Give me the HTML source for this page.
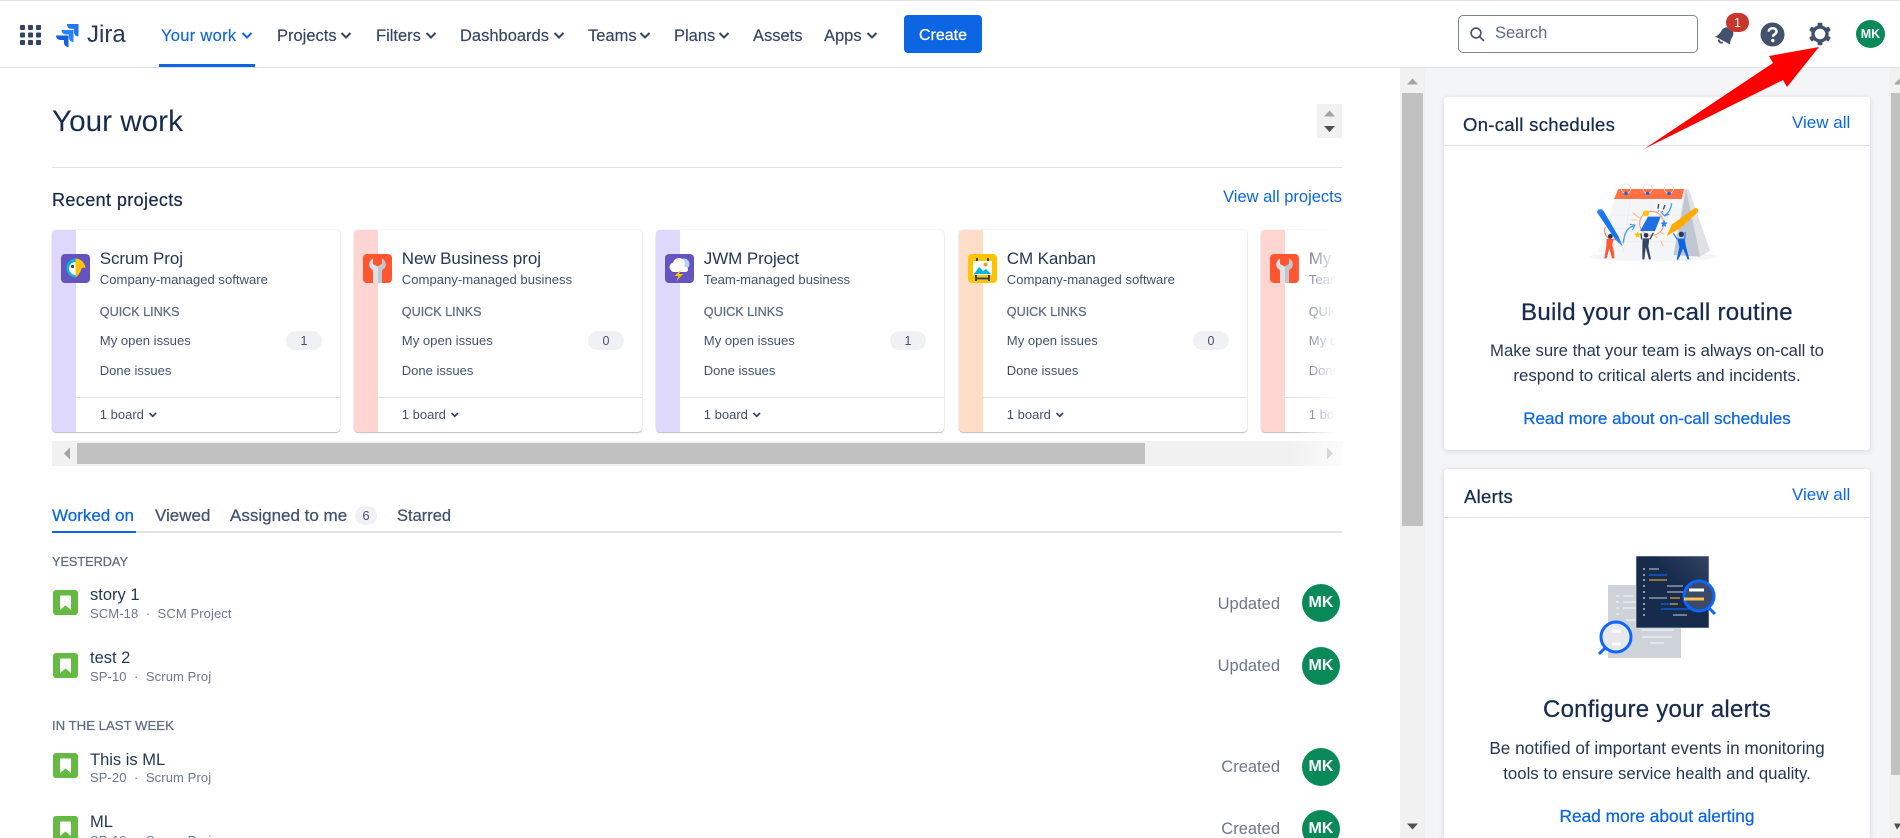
<!DOCTYPE html>
<html><head><meta charset="utf-8"><title>Your work - Jira</title>
<style>
html,body{margin:0;padding:0;width:1900px;height:838px;overflow:hidden;background:#fff;font-family:"Liberation Sans",sans-serif;color:#172b4d}
#w{position:relative;width:1900px;height:838px;overflow:hidden;background:#fff}
.a,.t{position:absolute}
.t{white-space:nowrap;line-height:20px;height:20px}
.nav{font-size:16.5px;color:#344563;-webkit-text-stroke:.15px #344563}
.m{-webkit-text-stroke:.25px currentColor}
.blue{color:#0c66e4}
.card{position:absolute;top:230px;width:288px;height:202px;background:#fff;border-radius:4px;box-shadow:0 1px 1px rgba(9,30,66,.25),0 0 1px rgba(9,30,66,.25);overflow:hidden}
.card .s{position:absolute;left:0;top:0;bottom:0;width:24px}
.card .t{left:47.8px}
.ti{top:19px;font-size:17px;color:#253858;letter-spacing:-.1px}
.su{top:40px;font-size:13.1px;color:#42526e}
.ql{top:72px;font-size:12.6px;color:#5e6c84;font-weight:400;-webkit-text-stroke:.25px #5e6c84}
.l1{top:101px;font-size:13.1px;color:#42526e}
.l2{top:131px;font-size:13px;color:#42526e}
.bd{top:175px;font-size:13px;color:#42526e}
.pill{position:absolute;left:234px;top:101px;width:36px;height:19px;border-radius:10px;background:#f0f1f4;font-size:12.5px;line-height:20px;text-align:center;color:#42526e}
.dv{position:absolute;left:24px;right:0;top:167px;height:1px;background:#dfe1e6}
.icon{position:absolute;left:9px;top:24px;width:29px;height:29px}
.rt{font-size:16.5px;color:#253858}
.rs{font-size:13px;color:#6b778c;letter-spacing:.1px}
.up{font-size:16.5px;color:#6b778c;text-align:right;width:90px;left:1190px}
.av{position:absolute;left:1302px;width:38px;height:38px;border-radius:50%;background:#0a8a59;color:#fff;font-size:16px;font-weight:700;line-height:38px;text-align:center}
.box{position:absolute;left:1444px;width:426px;background:#fff;border-radius:4px;box-shadow:0 1px 6px rgba(9,30,66,.14)}
.c{left:1444px;width:426px;text-align:center}
.hd{font-size:18.5px;letter-spacing:.3px;color:#172b4d}
.tb{font-size:17px;color:#42526e}
</style></head><body><div id="w">

<!-- top nav -->
<div class="a" style="left:0;top:0;width:1900px;height:1px;background:#e3e3e3"></div>
<div class="a" style="left:0;top:67px;width:1900px;height:1px;background:#dfe1e6"></div>
<svg class="a" style="left:20px;top:25px" width="22" height="20" viewBox="0 0 22 20" fill="#344563"><rect x="0" y="0" width="5" height="5" rx="1"/><rect x="8" y="0" width="5" height="5" rx="1"/><rect x="16" y="0" width="5" height="5" rx="1"/><rect x="0" y="7.5" width="5" height="5" rx="1"/><rect x="8" y="7.5" width="5" height="5" rx="1"/><rect x="16" y="7.5" width="5" height="5" rx="1"/><rect x="0" y="15" width="5" height="5" rx="1"/><rect x="8" y="15" width="5" height="5" rx="1"/><rect x="16" y="15" width="5" height="5" rx="1"/></svg>
<svg class="a" style="left:56px;top:24px" width="23" height="23" viewBox="0 0 23 23"><path d="M11 0h11.500v12.500c-2.600 0-4.500-2-4.500-4.500V4.800h-3.500C12.500 4.800 11 2.800 11 0z" fill="#1f78f0"/><path d="M5.500 6h12v12c-2.600 0-4.600-2-4.600-4.500v-3H10C7.500 10.500 5.500 8.500 5.500 6z" fill="#2684ff"/><path d="M0 11.500h12.500V23c-2.600 0-4.600-2-4.600-4.500V16H4.500C2 16 0 14 0 11.500z" fill="#1261d8"/></svg>
<div class="t" style="left:87px;top:24px;font-size:24px;line-height:22px;color:#253858">Jira</div>

<div class="t nav" style="left:161px;top:26px;letter-spacing:.3px;color:#0c66e4;-webkit-text-stroke:.15px #0c66e4">Your work</div>
<div class="t nav" style="left:277px;top:26px">Projects</div>
<div class="t nav" style="left:376px;top:26px">Filters</div>
<div class="t nav" style="left:460px;top:26px">Dashboards</div>
<div class="t nav" style="left:588px;top:26px">Teams</div>
<div class="t nav" style="left:674px;top:26px">Plans</div>
<div class="t nav" style="left:753px;top:26px">Assets</div>
<div class="t nav" style="left:824px;top:26px">Apps</div>
<svg class="a" style="left:0;top:0" width="900" height="67" fill="none" stroke="#344563" stroke-width="2"><path d="M242.500 33l4.500 4.500 4.500-4.500" stroke="#0c66e4"/><path d="M341.500 33l4.500 4.500 4.500-4.500M426.500 33l4.500 4.500 4.500-4.500M554.500 33l4.500 4.500 4.500-4.500M640.500 33l4.500 4.500 4.500-4.500M719.500 33l4.500 4.500 4.500-4.500M867.500 33l4.500 4.500 4.500-4.500"/></svg>
<div class="a" style="left:159px;top:64px;width:96px;height:3px;background:#0c66e4"></div>
<div class="a" style="left:904px;top:15px;width:78px;height:38px;background:#0c66e4;border-radius:4px;color:#fff;font-size:16px;line-height:41px;text-align:center;-webkit-text-stroke:.3px #fff">Create</div>

<div class="a" style="left:1458px;top:15px;width:238px;height:36px;border:1px solid #7a869a;border-radius:5px;background:#fff"></div>
<svg class="a" style="left:1470px;top:27px" width="15" height="15" fill="none" stroke="#42526e" stroke-width="1.600"><circle cx="6" cy="6" r="4.900"/><path d="M9.700 9.700l4.300 4.300"/></svg>
<div class="t" style="left:1495px;top:23px;font-size:16.500px;color:#5e6c84">Search</div>
<svg class="a" style="left:1712px;top:22px" width="26" height="24" viewBox="0 0 26 24"><path d="M3 14.500c3-1 5-3 6.500-6 2-3.500 6-4 9-2 3 2.200 4 5.500 1.500 9-1.500 2.500-2 4.500-1.800 7z" fill="#42526e"/><path d="M7 17.500c-.5 2.500 2 4 3.800 2.800" fill="none" stroke="#42526e" stroke-width="1.800"/></svg>
<div class="a" style="left:1726px;top:13px;width:23px;height:19px;border-radius:10px;background:#c9372c;color:#fff;font-size:13px;line-height:19px;text-align:center">1</div>
<svg class="a" style="left:1760px;top:22px" width="25" height="25" viewBox="0 0 25 25"><circle cx="12.500" cy="12.500" r="12" fill="#42526e"/><path d="M8.700 9.700c.1-2.300 1.800-3.500 3.900-3.500 2.300 0 3.900 1.300 3.900 3.200 0 1.600-1 2.400-2.100 3.100-1 .6-1.400 1.100-1.400 2.200" fill="none" stroke="#fff" stroke-width="2.500"/><circle cx="12.800" cy="18.500" r="1.700" fill="#fff"/></svg>
<svg class="a" style="left:1808px;top:22px" width="24" height="24" viewBox="0 0 24 24"><g fill="#42526e"><rect x="9.600" y="0.800" width="4.800" height="22.400" rx="1"/><rect x="9.600" y="0.800" width="4.800" height="22.400" rx="1" transform="rotate(60 12 12)"/><rect x="9.600" y="0.800" width="4.800" height="22.400" rx="1" transform="rotate(120 12 12)"/></g><circle cx="12" cy="12" r="7" fill="none" stroke="#42526e" stroke-width="3.400"/><circle cx="12" cy="12" r="5.300" fill="#fff"/></svg>
<div class="a" style="left:1856px;top:20px;width:29px;height:28px;border-radius:50%;background:#0a8a59;color:#fff;font-size:12.500px;font-weight:700;line-height:28px;text-align:center">MK</div>

<!-- left column -->
<div class="t" style="left:52px;top:107px;height:30px;line-height:30px;font-size:29.700px;color:#172b4d">Your work</div>
<div class="a" style="left:1317px;top:104px;width:25px;height:34px;background:#f1f1f1"></div>
<svg class="a" style="left:1317px;top:104px" width="25" height="34"><path d="M7 12.500l5.500-6 5.500 6z" fill="#a3a3a3"/><path d="M7 22h11l-5.500 6z" fill="#505050"/></svg>
<div class="a" style="left:52px;top:167px;width:1290px;height:1px;background:#dfe1e6"></div>
<div class="t m" style="left:52px;top:190px;font-size:18px;letter-spacing:.4px;color:#172b4d">Recent projects</div>
<div class="t blue" style="right:558px;top:187px;font-size:16.500px">View all projects</div>

<div class="a" style="left:50px;top:226px;width:1286px;height:212px;overflow:hidden">
<div style="position:relative;left:-50px;top:-226px;width:1400px;height:450px">

<div class="card" style="left:52px"><div class="s" style="background:#dfd8fd"></div>
<svg class="icon" viewBox="0 0 29 29"><rect width="29" height="29" rx="4" fill="#6554c0"/><path d="M14.500 4.500a9.500 9.500 0 0 0-8 14 9.500 9.500 0 0 0 8 5z" fill="#00b8d9"/><path d="M14.500 8a6.500 6.500 0 0 0 0 13z" fill="#fff"/><circle cx="11.500" cy="12.500" r="1.600" fill="#403294"/><path d="M14.500 4.500c5.500 0 9.500 4.500 10 9.500-1.500-.5-3-.5-4 .5-1 3.500-3 7-6 9z" fill="#ffc400"/></svg>
<div class="t ti">Scrum Proj</div><div class="t su">Company-managed software</div><div class="t ql">QUICK LINKS</div><div class="t l1">My open issues</div><div class="pill">1</div><div class="t l2">Done issues</div><div class="dv"></div><div class="t bd">1 board</div>
<svg class="a" style="left:96px;top:181px" width="10" height="8" fill="none" stroke="#344563" stroke-width="1.700"><path d="M1.500 2l3.300 3.300L8 2"/></svg></div>

<div class="card" style="left:354px"><div class="s" style="background:#ffd5d2"></div>
<svg class="icon" viewBox="0 0 29 29"><rect width="29" height="29" rx="4" fill="#ff5630"/><path d="M10 4.500c-3.500 2-5 6.500-2.500 9.500 1.500 1.500 2.500 1.500 2.500 3.500V29h9V17.500c0-2 1-2 2.500-3.500 2.500-3 1-7.500-2.500-9.500V10l-4.500 2.500L10 10z" fill="#dfe1e6"/><path d="M15 12.500l4-2.500V4.500c3.500 2 5 6.500 2.500 9.500-1.500 1.500-2.500 1.500-2.500 3.500V29h-4z" fill="#c1c7d0"/></svg>
<div class="t ti">New Business proj</div><div class="t su">Company-managed business</div><div class="t ql">QUICK LINKS</div><div class="t l1">My open issues</div><div class="pill">0</div><div class="t l2">Done issues</div><div class="dv"></div><div class="t bd">1 board</div>
<svg class="a" style="left:96px;top:181px" width="10" height="8" fill="none" stroke="#344563" stroke-width="1.700"><path d="M1.500 2l3.300 3.300L8 2"/></svg></div>

<div class="card" style="left:656px"><div class="s" style="background:#dfd8fd"></div>
<svg class="icon" viewBox="0 0 29 29"><rect width="29" height="29" rx="4" fill="#6554c0"/><circle cx="19" cy="10" r="5.500" fill="#b3d4ff"/><circle cx="9" cy="13" r="4.500" fill="#fff"/><circle cx="14" cy="10" r="6" fill="#fff"/><rect x="6" y="13" width="17" height="5" rx="2.500" fill="#fff"/><path d="M15.500 16l-6 6h4l-2 5 6.500-7h-4l2-4z" fill="#ffc400"/></svg>
<div class="t ti">JWM Project</div><div class="t su">Team-managed business</div><div class="t ql">QUICK LINKS</div><div class="t l1">My open issues</div><div class="pill">1</div><div class="t l2">Done issues</div><div class="dv"></div><div class="t bd">1 board</div>
<svg class="a" style="left:96px;top:181px" width="10" height="8" fill="none" stroke="#344563" stroke-width="1.700"><path d="M1.500 2l3.300 3.300L8 2"/></svg></div>

<div class="card" style="left:959px"><div class="s" style="background:#fedec8"></div>
<svg class="icon" viewBox="0 0 29 29"><rect width="29" height="29" rx="4" fill="#ffc400"/><rect x="5" y="7" width="19" height="14" fill="#fff"/><path d="M6 20l5-7 4 4 3-2 5 5z" fill="#00b8d9"/><circle cx="17.500" cy="10.500" r="2" fill="#ff991f"/><path d="M8 21v6M21 21v6M8 24.500h13M9 7V4M20 7V4" stroke="#253858" stroke-width="1.800"/></svg>
<div class="t ti">CM Kanban</div><div class="t su">Company-managed software</div><div class="t ql">QUICK LINKS</div><div class="t l1">My open issues</div><div class="pill">0</div><div class="t l2">Done issues</div><div class="dv"></div><div class="t bd">1 board</div>
<svg class="a" style="left:96px;top:181px" width="10" height="8" fill="none" stroke="#344563" stroke-width="1.700"><path d="M1.500 2l3.300 3.300L8 2"/></svg></div>

<div class="card" style="left:1261px"><div class="s" style="background:#ffd5d2"></div>
<svg class="icon" viewBox="0 0 29 29"><rect width="29" height="29" rx="4" fill="#ff5630"/><path d="M10 4.500c-3.500 2-5 6.500-2.500 9.500 1.500 1.500 2.500 1.500 2.500 3.500V29h9V17.500c0-2 1-2 2.500-3.500 2.500-3 1-7.500-2.500-9.500V10l-4.500 2.500L10 10z" fill="#dfe1e6"/><path d="M15 12.500l4-2.500V4.500c3.500 2 5 6.500 2.500 9.500-1.500 1.500-2.500 1.500-2.500 3.500V29h-4z" fill="#c1c7d0"/></svg>
<div class="t ti">My Project</div><div class="t su">Team-managed business</div><div class="t ql">QUICK LINKS</div><div class="t l1">My open issues</div><div class="pill">0</div><div class="t l2">Done issues</div><div class="dv"></div><div class="t bd">1 board</div></div>
</div></div>
<div class="a" style="left:1296px;top:226px;width:40px;height:212px;background:linear-gradient(90deg,rgba(255,255,255,0),#fff)"></div>

<div class="a" style="left:52px;top:441px;width:1290px;height:25px;background:#f1f1f1"></div>
<div class="a" style="left:77px;top:443px;width:1068px;height:21px;background:#c1c1c1"></div>
<svg class="a" style="left:52px;top:441px" width="1290" height="25"><path d="M12 12.500l6-6v12z" fill="#a3a3a3"/><path d="M1275 6.500l6 6-6 6z" fill="#a3a3a3"/></svg>
<div class="a" style="left:1290px;top:441px;width:52px;height:25px;background:linear-gradient(90deg,rgba(255,255,255,0),rgba(255,255,255,.75))"></div>

<!-- tabs -->
<div class="a" style="left:52px;top:531px;width:1290px;height:2px;background:#dfe1e6"></div>
<div class="a" style="left:52px;top:531px;width:84px;height:2px;background:#0c66e4"></div>
<div class="t m tb" style="left:52px;top:506px;color:#0c66e4">Worked on</div>
<div class="t m tb" style="left:155px;top:506px">Viewed</div>
<div class="t m tb" style="left:230px;top:506px">Assigned to me</div>
<div class="a" style="left:355px;top:506px;width:22px;height:19px;border-radius:10px;background:#f0f1f4;color:#42526e;font-size:13px;line-height:20px;text-align:center">6</div>
<div class="t m" style="left:397px;top:506px;font-size:16.500px;color:#42526e">Starred</div>

<div class="t m" style="left:52px;top:552px;font-size:12.700px;color:#5e6c84">YESTERDAY</div>
<svg class="a" style="left:53px;top:590px" width="25" height="25" viewBox="0 0 25 25"><rect width="25" height="25" rx="3" fill="#65ba43"/><path d="M7 6.500a1 1 0 0 1 1-1h9a1 1 0 0 1 1 1V20l-5.500-4.500L7 20z" fill="#fff"/></svg>
<div class="t rt" style="left:90px;top:585px">story 1</div>
<div class="t rs" style="left:90px;top:604px">SCM-18 &nbsp;·&nbsp; SCM Project</div>
<div class="t up" style="top:594px">Updated</div><div class="av" style="top:584px">MK</div>

<svg class="a" style="left:53px;top:653px" width="25" height="25" viewBox="0 0 25 25"><rect width="25" height="25" rx="3" fill="#65ba43"/><path d="M7 6.500a1 1 0 0 1 1-1h9a1 1 0 0 1 1 1V20l-5.500-4.500L7 20z" fill="#fff"/></svg>
<div class="t rt" style="left:90px;top:648px">test 2</div>
<div class="t rs" style="left:90px;top:667px">SP-10 &nbsp;·&nbsp; Scrum Proj</div>
<div class="t up" style="top:656px">Updated</div><div class="av" style="top:647px">MK</div>

<div class="t m" style="left:52px;top:716px;font-size:13.200px;color:#5e6c84">IN THE LAST WEEK</div>
<svg class="a" style="left:53px;top:753px" width="25" height="25" viewBox="0 0 25 25"><rect width="25" height="25" rx="3" fill="#65ba43"/><path d="M7 6.500a1 1 0 0 1 1-1h9a1 1 0 0 1 1 1V20l-5.500-4.500L7 20z" fill="#fff"/></svg>
<div class="t rt" style="left:90px;top:750px">This is ML</div>
<div class="t rs" style="left:90px;top:768px">SP-20 &nbsp;·&nbsp; Scrum Proj</div>
<div class="t up" style="top:757px">Created</div><div class="av" style="top:748px">MK</div>

<svg class="a" style="left:53px;top:816px" width="25" height="25" viewBox="0 0 25 25"><rect width="25" height="25" rx="3" fill="#65ba43"/><path d="M7 6.500a1 1 0 0 1 1-1h9a1 1 0 0 1 1 1V20l-5.500-4.500L7 20z" fill="#fff"/></svg>
<div class="t rt" style="left:90px;top:812px">ML</div>
<div class="t rs" style="left:90px;top:831px">SP-19 &nbsp;·&nbsp; Scrum Proj</div>
<div class="t up" style="top:819px">Created</div><div class="av" style="top:810px">MK</div>

<!-- middle scrollbar -->
<div class="a" style="left:1400px;top:68px;width:25px;height:770px;background:#f1f1f1"></div>
<div class="a" style="left:1402px;top:93px;width:21px;height:433px;background:#c1c1c1"></div>
<svg class="a" style="left:1400px;top:68px" width="25" height="770"><path d="M7 16.500l5.500-6 5.500 6z" fill="#a3a3a3"/><path d="M7 755.500h11l-5.500 6z" fill="#505050"/></svg>

<!-- right panel -->
<div class="a" style="left:1425px;top:68px;width:464px;height:770px;background:#f4f5f7"></div>
<div class="a" style="left:1889px;top:68px;width:11px;height:770px;background:#f1f1f1"></div>
<div class="a" style="left:1891px;top:93px;width:9px;height:682px;background:#c1c1c1"></div>
<svg class="a" style="left:1889px;top:68px" width="11" height="770"><path d="M5 16.500l5.500-6 .5 6z" fill="#a3a3a3"/><path d="M5 755.500h6v2l-3 4z" fill="#505050"/></svg>

<div class="box" style="top:97px;height:353px"></div>
<div class="a" style="left:1444px;top:145px;width:426px;height:1px;background:#dfe1e6"></div>
<div class="t m hd" style="left:1463px;top:115px">On-call schedules</div>
<div class="t blue" style="left:1792px;top:113px;font-size:17px">View all</div>

<svg class="a" style="left:1540px;top:160px" width="200" height="120" viewBox="0 0 600 360">
<ellipse cx="340" cy="290" rx="190" ry="14" fill="#f4f5f7"/>
<path d="M430 87h16l64 185-30 18-80-5z" fill="#dfe1e6"/>
<path d="M438 87l-15 85-23 113 80 5z" fill="#c1c7d0"/>
<path d="M225 115h205l-30 170-225-10z" fill="#f4f5f7"/>
<path d="M215 165l210 0M205 205l205 0M192 245l210 0M270 117l-20 160M335 117l-20 165" stroke="#ebecf0" stroke-width="2" fill="none"/>
<path d="M222 117l13-30h197l-7 30z" fill="#ff7043"/>
<g fill="none" stroke="#dfe1e6" stroke-width="2.500"><circle cx="258" cy="86" r="14"/><circle cx="323" cy="86" r="14"/><circle cx="387" cy="86" r="14"/></g>
<g fill="#0c66e4"><circle cx="258" cy="100" r="5"/><circle cx="323" cy="100" r="5"/><circle cx="387" cy="100" r="5"/></g>
<path d="M171 157c0-10 14-13 19-5l47 80 11 27-22-20z" fill="#2684ff"/>
<path d="M190 152l47 80-10 6-50-76z" fill="#0c66e4" opacity=".5"/>
<path d="M462 146c8-6 17 3 11 11l-53 48-40 23 16-35z" fill="#ffab00"/>
<path d="M196 200a28 28 0 0 0 34 38" fill="none" stroke="#ff7452" stroke-width="3"/>
<path d="M250 250c2-30 12-48 32-53" fill="none" stroke="#4c9aff" stroke-width="4"/><path d="M270 193l15 3-8 14" fill="none" stroke="#4c9aff" stroke-width="3.500"/>
<path d="M395 130c-2 16-8 28-20 36M362 155l12 13 14-6" fill="none" stroke="#4c9aff" stroke-width="4"/>
<path d="M356 132l-2 14M375 135l-5 13M356 152v2M368 153l-1 2" stroke="#344563" stroke-width="4"/>
<circle cx="335" cy="190" r="36" fill="none" stroke="#ff8f73" stroke-width="3"/>
<circle cx="318" cy="160" r="9" fill="#ffc400"/>
<path d="M324 170h38l-17 43h-45z" fill="#1f6fe0"/>
<path d="M372 180l4 7 7 1-6 5 1 8-6-4-7 4 2-8-5-5 7-1z" fill="#2684ff"/>
<path d="M293 214l3 6 7 1-5 5 1 7-6-3-6 3 1-7-5-5 7-1z" fill="#ffc400"/>
<path d="M278 158l20 16M275 180h14M345 228l8 6M362 242l8 16M360 215l12 8" stroke="#ff991f" stroke-width="2.500" opacity=".7"/>
<circle cx="211" cy="229" r="7" fill="#253858"/>
<path d="M200 237h20l-3 18 5 22 1 18h-7l-8-30-8 30h-7l6-35z" fill="#ff5630"/>
<circle cx="318" cy="226" r="7" fill="#253858"/>
<path d="M308 235h20l-3 25 8 38h-6l-10-36-4 36h-6v-40z" fill="#344563"/>
<path d="M305 238l-2-18M330 238l10-20" stroke="#344563" stroke-width="4"/>
<circle cx="424" cy="223" r="8" fill="#253858"/>
<path d="M412 236h22l4 24 10 38h-5l-14-32-14 33h-5l8-38z" fill="#0c66e4"/>
<path d="M412 238l-12-18M434 238l2-22" stroke="#2684ff" stroke-width="4"/>
</svg>
<div class="t c m" style="top:301px;height:24px;line-height:24px;font-size:24px;letter-spacing:.3px;color:#172b4d">Build your on-call routine</div>
<div class="t c" style="top:341px;font-size:16.700px;color:#253858">Make sure that your team is always on-call to</div>
<div class="t c" style="top:366px;font-size:16.900px;color:#253858">respond to critical alerts and incidents.</div>
<div class="t c m blue" style="top:409px;font-size:17px;color:#0c66e4">Read more about on-call schedules</div>

<div class="box" style="top:469px;height:400px"></div>
<div class="a" style="left:1444px;top:517px;width:426px;height:1px;background:#dfe1e6"></div>
<div class="t m hd" style="left:1464px;top:487px">Alerts</div>
<div class="t blue" style="left:1792px;top:485px;font-size:17px">View all</div>

<svg class="a" style="left:1596px;top:556px" width="125" height="106" viewBox="0 0 125 106">
<rect x="12" y="29" width="73" height="73" fill="#ced3da"/>
<g stroke="#eef0f3" stroke-width="1.200"><path d="M20 40h3M27 40h10M20 46h3M27 46h14M20 52h3M27 52h14M20 58h3M46 58h8M30 64h10M46 74h20M52 74h26M46 81h30M54 87h14"/></g>
<defs><linearGradient id="g1" x1="0" y1="1" x2="1" y2="0"><stop offset="0.600" stop-color="#172b4d"/><stop offset="1" stop-color="#344563"/></linearGradient></defs>
<rect x="40" y="0" width="73" height="72" fill="url(#g1)" stroke="#dfe1e6" stroke-width=".6"/>
<g stroke-width="1.300"><path d="M47 13h2M47 19h2M47 24h2M47 30h2M47 36h2M47 42h2M47 48h2M47 53h2M47 59h2" stroke="#dfe1e6"/><path d="M53 13h10M71 30h16M71 36h16M53 42h18M77 59h14" stroke="#a5adba"/><path d="M53 19h18M65 48h16M65 53h32" stroke="#0c66e4"/><path d="M53 24h18M74 42h10M74 48h8" stroke="#e0a030"/></g>
<circle cx="103" cy="40" r="15" fill="#3a4a68" stroke="#0b66ff" stroke-width="3"/>
<path d="M93 34h15" stroke="#fff" stroke-width="3"/><path d="M88 43h20" stroke="#ffbe4d" stroke-width="3"/>
<path d="M113 52l6 6" stroke="#0b66ff" stroke-width="3"/>
<circle cx="20" cy="81" r="15" fill="#e6e8ec" stroke="#0b66ff" stroke-width="3"/>
<path d="M16 75h9M16 88h9" stroke="#fff" stroke-width="3"/>
<path d="M9 92l-6 6" stroke="#0b66ff" stroke-width="3"/>
</svg>
<div class="t c m" style="top:698px;height:24px;line-height:24px;font-size:24px;letter-spacing:.25px;color:#172b4d">Configure your alerts</div>
<div class="t c" style="top:738px;font-size:17.200px;color:#253858">Be notified of important events in monitoring</div>
<div class="t c" style="top:764px;font-size:16.800px;color:#253858">tools to ensure service health and quality.</div>
<div class="t c m blue" style="top:806px;font-size:17.300px;color:#0c66e4">Read more about alerting</div>

<!-- red arrow -->
<svg class="a" style="left:1640px;top:40px" width="190" height="115"><path d="M4 109L133 23 129 16 179 7 147 47 143 40z" fill="#ff0000"/></svg>
</div></body></html>
